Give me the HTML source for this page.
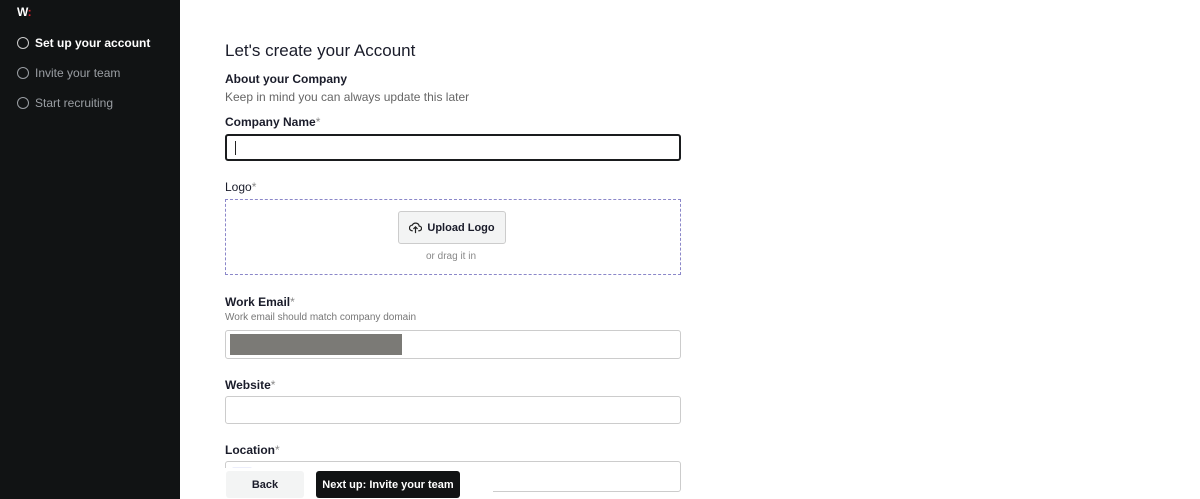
<!DOCTYPE html>
<html><head><meta charset="utf-8"><style>
*{margin:0;padding:0;box-sizing:border-box}
body{width:1200px;height:499px;overflow:hidden;background:#fff;font-family:"Liberation Sans",sans-serif;color:#1a1c2a;position:relative}
.side{position:absolute;left:0;top:0;width:180px;height:499px;background:#111314}
.logo{position:absolute;left:17px;top:5px;color:#fff;font-weight:bold;font-size:12px;letter-spacing:-0.5px}
.logo span{color:#e0202e}
.step{position:absolute;left:17px;font-size:12px;color:#9a9ea3;display:flex;align-items:center}
.step i{display:inline-block;width:12px;height:12px;border:1.3px solid #9a9ea3;border-radius:50%;margin-right:6px}
.step.a{color:#fff;font-weight:bold}
.step.a i{border-color:#ccc}
.t{position:absolute;left:225px}
.inp{position:absolute;left:225px;width:456px;border:1px solid #ccc;border-radius:3px;background:#fff}
</style></head><body>
<div class="side">
<div class="logo">W<span>:</span></div>
<div class="step a" style="top:36px"><i></i>Set up your account</div>
<div class="step" style="top:66px"><i></i>Invite your team</div>
<div class="step" style="top:96px"><i></i>Start recruiting</div>
</div>
<div class="t" style="top:41px;font-size:17px">Let's create your Account</div>
<div class="t" style="top:72px;font-size:12px;font-weight:bold">About your Company</div>
<div class="t" style="top:90px;font-size:12px;color:#666">Keep in mind you can always update this later</div>
<div class="t" style="top:115px;font-size:12px;font-weight:bold">Company Name<span style="color:#888;font-weight:normal">*</span></div>
<div class="inp" style="top:134px;height:27px;border:2px solid #1a1c1e"><div style="position:absolute;left:8px;top:5px;width:1px;height:14px;background:#222"></div></div>
<div class="t" style="top:180px;font-size:12px">Logo<span style="color:#888">*</span></div>
<div style="position:absolute;left:225px;top:199px;width:456px;height:76px;border:1px dashed #8b87c9"></div>
<div style="position:absolute;left:398px;top:211px;width:108px;height:33px;border:1px solid #ccc;border-radius:3px;background:#f3f4f4;font-size:11px;font-weight:bold;display:flex;align-items:center;justify-content:center;gap:5px">
<svg width="13" height="13" viewBox="0 0 14 14" fill="none" stroke="#222" stroke-width="1.3"><path d="M4 10.5H3.5a3 3 0 0 1 0-6 4 4 0 0 1 7.5 1 2.5 2.5 0 0 1 0 5H10"/><path d="M7 13V6.5M4.8 8.5 7 6.3l2.2 2.2"/></svg>Upload Logo</div>
<div class="t" style="left:426px;top:251px;font-size:10px;color:#888">or drag it in</div>
<div class="t" style="top:295px;font-size:12px;font-weight:bold">Work Email<span style="color:#888;font-weight:normal">*</span></div>
<div class="t" style="top:312px;font-size:10px;color:#777">Work email should match company domain</div>
<div class="inp" style="top:330px;height:29px"><div style="position:absolute;left:4px;top:3px;width:172px;height:21px;background:#7b7a76"></div></div>
<div class="t" style="top:378px;font-size:12px;font-weight:bold">Website<span style="color:#888;font-weight:normal">*</span></div>
<div class="inp" style="top:396px;height:28px"></div>
<div class="t" style="top:443px;font-size:12px;font-weight:bold">Location<span style="color:#888;font-weight:normal">*</span></div>
<div class="inp" style="top:461px;height:31px"><div style="position:absolute;left:6px;top:5px;width:20px;height:7px;background:#eceefb;border-radius:2px"></div></div>
<div style="position:absolute;left:224px;top:468px;width:269px;height:31px;background:#fff"></div>
<div style="position:absolute;left:226px;top:471px;width:78px;height:27px;background:#f3f4f4;border-radius:3px;font-size:11px;font-weight:bold;display:flex;align-items:center;justify-content:center">Back</div>
<div style="position:absolute;left:316px;top:471px;width:144px;height:27px;background:#111314;border-radius:3px;color:#fff;font-size:11px;font-weight:bold;display:flex;align-items:center;justify-content:center">Next up: Invite your team</div>
</body></html>
